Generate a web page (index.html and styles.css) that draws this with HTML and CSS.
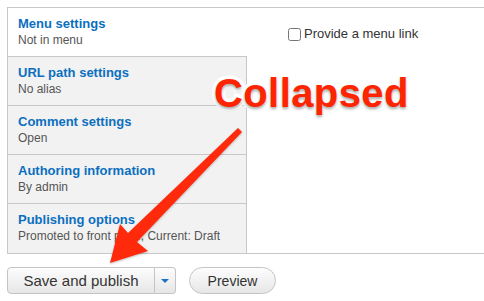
FILE: index.html
```html
<!DOCTYPE html>
<html lang="en">
<head>
    <meta charset="UTF-8">
    <meta name="viewport" content="width=device-width, initial-scale=1.0">
    <title>Node settings</title>
    <link rel="stylesheet" href="styles.css">
</head>
<body>
    <div class="frame">
        <ul class="tabs">
            <li class="tab selected">
                <a class="tab-title" href="#">Menu settings</a>
                <span class="tab-summary">Not in menu</span>
            </li>
            <li class="tab">
                <a class="tab-title" href="#">URL path settings</a>
                <span class="tab-summary">No alias</span>
            </li>
            <li class="tab">
                <a class="tab-title" href="#">Comment settings</a>
                <span class="tab-summary">Open</span>
            </li>
            <li class="tab">
                <a class="tab-title" href="#">Authoring information</a>
                <span class="tab-summary">By admin</span>
            </li>
            <li class="tab">
                <a class="tab-title" href="#">Publishing options</a>
                <span class="tab-summary">Promoted to front page, Current: Draft</span>
            </li>
        </ul>
        <div class="panel">
            <label class="check"><input type="checkbox"> Provide a menu link</label>
        </div>
    </div>

    <div class="actions">
        <div class="split">
            <button class="button main">Save and publish</button>
            <button class="button toggle"><span class="caret"></span></button>
        </div>
        <button class="button pill">Preview</button>
    </div>

    <!-- annotation -->
    <div class="callout">Collapsed</div>
    <svg class="arrow" width="484" height="301" viewBox="0 0 484 301">
        <polygon points="110,263 120,224 128,233 238,128 242,132 137,242 148,251" fill="#ff2a0c"/>
    </svg>
</body>
</html>
```

FILE: styles.css
```css
body {
    margin: 0;
    font-family: "Liberation Sans", Arial, sans-serif;
    background: #fff;
    color: #333;
    width: 484px;
    height: 301px;
    overflow: hidden;
    position: relative;
}
.frame {
    display: flex;
    margin: 7px 0 0 7px;
    border: 1px solid #c8c8c8;
    border-right: none;
}
.tabs {
    list-style: none;
    margin: 0;
    padding: 0;
    width: 239px;
}
.tab {
    display: flex;
    flex-direction: column;
    height: 49px;
    box-sizing: border-box;
    padding: 8px 10px;
    background: #f2f2f2;
    border-top: 1px solid #c8c8c8;
    border-right: 1px solid #c8c8c8;
}
.tab:first-child {
    border-top: none;
    height: 48px;
}
.tab:last-child {
    height: 50px;
}
.tab.selected {
    background: #fff;
    border-right-color: #fff;
}
.tab-title {
    color: #0b6fc0;
    font-weight: bold;
    font-size: 13px;
    line-height: 16px;
    text-decoration: none;
}
.tab-summary {
    color: #555;
    font-size: 12px;
    line-height: 16px;
    white-space: nowrap;
}
.panel {
    flex: 1;
    padding: 18px 0 0 41px;
}
.check {
    display: flex;
    align-items: center;
    gap: 3px;
    font-size: 13px;
    line-height: 16px;
    color: #333;
}
.check input {
    margin: 0;
    width: 13px;
    height: 13px;
}
.actions {
    display: flex;
    gap: 13px;
    margin: 13px 0 0 7px;
}
.split {
    display: flex;
}
.button {
    font-family: "Liberation Sans", Arial, sans-serif;
    font-size: 15px;
    color: #333;
    height: 27px;
    border: 1px solid #c4c4c4;
    background: linear-gradient(#fdfdfd, #e6e6e6);
    padding: 0;
}
.main {
    width: 148px;
    border-radius: 4px 0 0 4px;
}
.toggle {
    width: 21px;
    border-left: none;
    border-radius: 0 4px 4px 0;
    display: flex;
    align-items: center;
    justify-content: center;
}
.caret {
    width: 0;
    height: 0;
    border-left: 4px solid transparent;
    border-right: 4px solid transparent;
    border-top: 4px solid #1a72c4;
}
.pill {
    width: 87px;
    border-radius: 14px;
    font-size: 14px;
}
.callout {
    position: absolute;
    left: 214px;
    top: 73px;
    font-size: 40px;
    line-height: 40px;
    font-weight: bold;
    letter-spacing: 0.4px;
    color: #ff2400;
    -webkit-text-stroke: 7px #fff;
    paint-order: stroke fill;
    text-shadow: 0 2px 3px rgba(0, 0, 0, 0.35);
}
.arrow {
    position: absolute;
    left: 0;
    top: 0;
    filter: drop-shadow(0 1px 1px rgba(0, 0, 0, 0.25));
}
```
